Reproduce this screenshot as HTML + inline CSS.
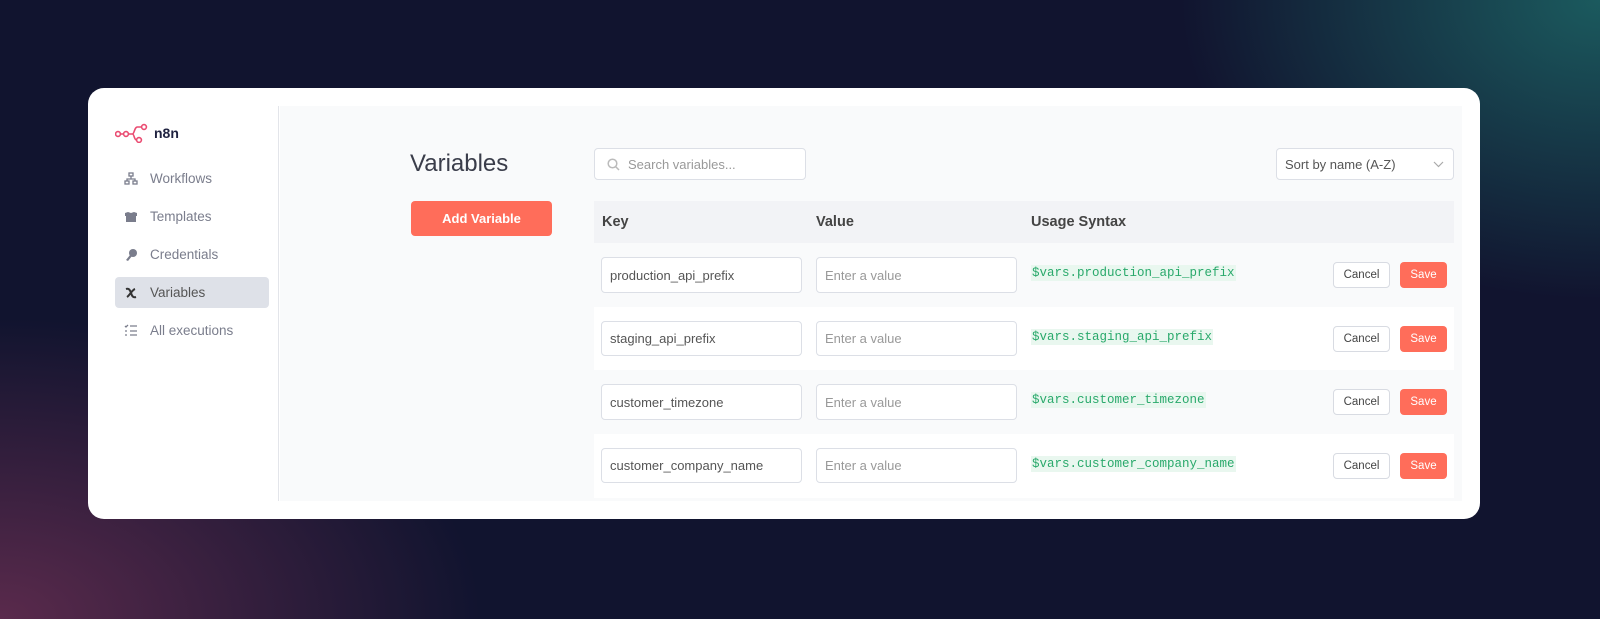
<!DOCTYPE html>
<html><head><meta charset="utf-8"><style>
*{box-sizing:border-box;margin:0;padding:0}
body{width:1600px;height:619px;overflow:hidden;font-family:"Liberation Sans",sans-serif;
background:radial-gradient(ellipse 420px 300px at 1600px 0px,#1b5a5e 0%,rgba(20,40,70,0) 100%),radial-gradient(ellipse 480px 300px at 0px 619px,#5a2a4c 0%,rgba(40,20,60,0) 100%),#11142f;position:relative}
.card{position:absolute;left:88px;top:88px;width:1392px;height:431px;background:#fff;border-radius:16px;overflow:hidden}
.side{position:absolute;left:0;top:18px;width:191px;height:395px;border-right:1px solid #e3e5ea}
.main{position:absolute;left:192px;top:18px;width:1182px;height:395px;background:#f9fafb}
.logo{position:absolute;left:27px;top:17px;display:flex;align-items:center;gap:6px;font-weight:bold;font-size:14px;color:#1f2240}
.nav{position:absolute;left:27px;width:154px;height:31px;border-radius:4px;display:flex;align-items:center;font-size:13.5px;color:#7a7d8c}
.nav svg{position:absolute;left:9px}
.nav span{position:absolute;left:35px}
.act{background:#dee1e8;color:#555}
h1{position:absolute;font-weight:normal;font-size:24px;color:#3a3d4a}
.btn{position:absolute;background:#ff6d5a;color:#fff;border-radius:4px;font-size:13px;font-weight:bold;text-align:center}
.inp{position:absolute;background:#fff;border:1px solid #dcdfe6;border-radius:4px;font-size:13px;display:flex;align-items:center;padding-left:8px;color:#555}
.ph{color:#999}
.th{position:absolute;font-weight:bold;font-size:14.5px;color:#444}
.row{position:absolute;left:314px;width:860px;height:64px}
.code{position:absolute;font-family:"Liberation Mono",monospace;font-size:12.5px;color:#29a96b;background:#e9f7ef;padding:1px 1px}
.cancel{position:absolute;width:57px;height:26px;border:1px solid #d8dbe2;border-radius:4px;background:#fff;font-size:11.5px;color:#444;text-align:center;line-height:24px}
.save{position:absolute;width:47px;height:26px;border-radius:4px;background:#ff6d5a;font-size:11.5px;color:#fff;text-align:center;line-height:26px}
</style></head><body>
<div class="card">
<div class="side">
<div class="logo"><svg width="33" height="20" viewBox="0 0 33 20" fill="none" stroke="#ea4b71" stroke-width="1.6"><circle cx="3" cy="11" r="2.4"/><circle cx="11" cy="11" r="2.4"/><circle cx="29" cy="4" r="2.4"/><circle cx="24" cy="17" r="2.4"/><path d="M5.4 11h3.2M13.4 11h4c2 0 2-7 5-7h4.2M17.4 11c2 0 1.5 6 4.2 6"/></svg>n8n</div>
<div class="nav" style="top:57px"><svg width="14" height="14" viewBox="0 0 14 14" fill="none" stroke="#7a7d8c" stroke-width="1.3"><rect x="5" y="1" width="4" height="3"/><rect x="1" y="9" width="4" height="3"/><rect x="9" y="9" width="4" height="3"/><path d="M7 4v3M3 9V7h8v2"/></svg><span>Workflows</span></div>
<div class="nav" style="top:95px"><svg width="14" height="14" viewBox="0 0 14 14" fill="#7a7d8c"><path d="M1 3l3-1 3 1 3-1 3 1v3H1zM2 6h10v6H2z"/></svg><span>Templates</span></div>
<div class="nav" style="top:133px"><svg width="14" height="14" viewBox="0 0 14 14" fill="#7a7d8c"><circle cx="9" cy="5" r="4"/><path d="M6 7l-4 5 2 1 4-5z"/></svg><span>Credentials</span></div>
<div class="nav act" style="top:171px"><svg width="14" height="14" viewBox="0 0 14 14" fill="none" stroke="#333" stroke-width="2"><path d="M2 3c3-1 4 1 5 4s2 5 5 4M11 3C8 4 6 9 3 11"/></svg><span>Variables</span></div>
<div class="nav" style="top:209px"><svg width="14" height="14" viewBox="0 0 14 14" fill="none" stroke="#7a7d8c" stroke-width="1.3"><path d="M1 2l1 1 2-2M1 7h2M1 11h2M6 2h7M6 7h7M6 11h7"/></svg><span>All executions</span></div>
</div>
<div class="main">
<h1 style="left:130px;top:44px">Variables</h1>
<div class="btn" style="left:131px;top:95px;width:141px;height:35px;line-height:35px">Add Variable</div>
<div class="inp" style="left:314px;top:42px;width:212px;height:32px;padding-left:33px"><svg style="position:absolute;left:12px;top:9px" width="13" height="13" viewBox="0 0 13 13" fill="none" stroke="#bbb" stroke-width="1.5"><circle cx="5.5" cy="5.5" r="4.3"/><path d="M8.5 8.5l3.5 3.5"/></svg><span class="ph">Search variables...</span></div>
<div class="inp" style="left:996px;top:42px;width:178px;height:32px;color:#555">Sort by name (A-Z)<svg style="position:absolute;right:9px;top:12px" width="11" height="7" viewBox="0 0 11 7" fill="none" stroke="#aaa" stroke-width="1.2"><path d="M1 1l4.5 4.5L10 1"/></svg></div>
<div style="position:absolute;left:314px;top:95px;width:860px;height:42px;background:#f2f3f6"></div>
<div class="th" style="left:322px;top:108px">Key</div>
<div class="th" style="left:536px;top:108px">Value</div>
<div class="th" style="left:751px;top:108px">Usage Syntax</div>

<div class="row" style="top:137px;background:#f9fafb"></div>
<div class="row" style="top:201px;background:#fff"></div>
<div class="row" style="top:264px;background:#f9fafb"></div>
<div class="row" style="top:328px;background:#fff"></div>

<div class="inp" style="left:321px;top:151px;width:201px;height:36px">production_api_prefix</div>
<div class="inp ph" style="left:536px;top:151px;width:201px;height:36px">Enter a value</div>
<div class="code" style="left:751px;top:159px">$vars.production_api_prefix</div>
<div class="cancel" style="left:1053px;top:156px">Cancel</div><div class="save" style="left:1120px;top:156px">Save</div>

<div class="inp" style="left:321px;top:215px;width:201px;height:35px">staging_api_prefix</div>
<div class="inp ph" style="left:536px;top:215px;width:201px;height:35px">Enter a value</div>
<div class="code" style="left:751px;top:223px">$vars.staging_api_prefix</div>
<div class="cancel" style="left:1053px;top:220px">Cancel</div><div class="save" style="left:1120px;top:220px">Save</div>

<div class="inp" style="left:321px;top:278px;width:201px;height:36px">customer_timezone</div>
<div class="inp ph" style="left:536px;top:278px;width:201px;height:36px">Enter a value</div>
<div class="code" style="left:751px;top:286px">$vars.customer_timezone</div>
<div class="cancel" style="left:1053px;top:283px">Cancel</div><div class="save" style="left:1120px;top:283px">Save</div>

<div class="inp" style="left:321px;top:342px;width:201px;height:35px">customer_company_name</div>
<div class="inp ph" style="left:536px;top:342px;width:201px;height:35px">Enter a value</div>
<div class="code" style="left:751px;top:350px">$vars.customer_company_name</div>
<div class="cancel" style="left:1053px;top:347px">Cancel</div><div class="save" style="left:1120px;top:347px">Save</div>
</div>
</div>
</body></html>
